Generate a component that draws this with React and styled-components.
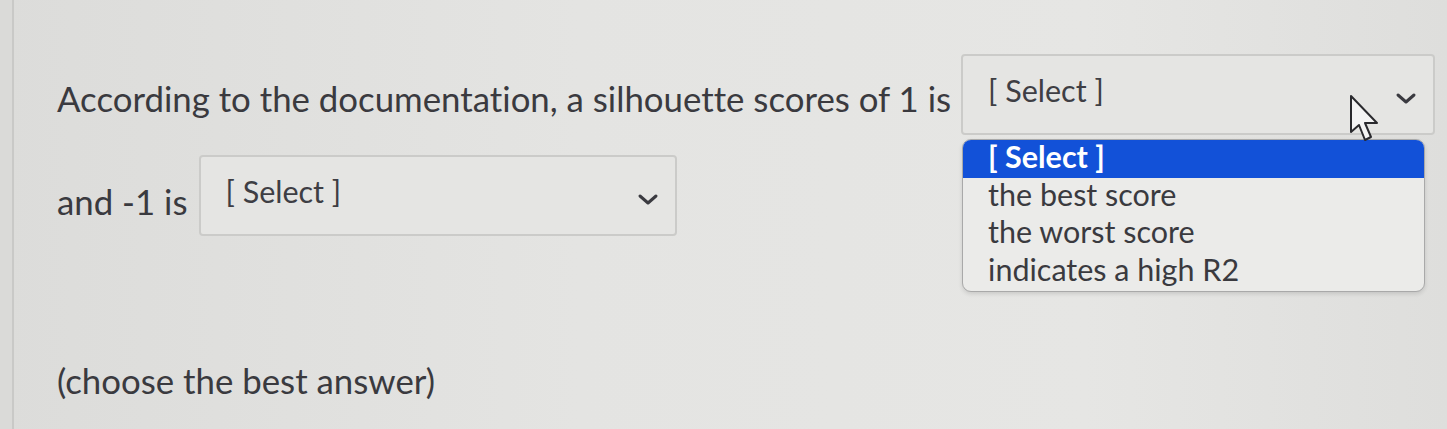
import React from 'react';
import styled, { createGlobalStyle } from 'styled-components';

const GlobalStyle = createGlobalStyle`
  html, body {
    margin: 0;
    padding: 0;
    background: #e2e2e0;
  }
  body {
    font-family: Lato, "Open Sans", sans-serif;
    font-variant-ligatures: none;
    color: #3a3a3f;
  }
`;

const Page = styled.div`
  width: 1447px;
  height: 429px;
  overflow: hidden;
  display: flex;
  background: linear-gradient(90deg, #dcdcda 0%, #e4e4e2 40%, #e6e6e4 75%, #dededc 100%);
`;

const Gutter = styled.div`
  width: 12px;
  flex-shrink: 0;
  border-right: 2px solid #c9c9c7;
  background: #dadad8;
`;

const Question = styled.div`
  flex: 1;
  padding: 54px 0 0 43px;
  display: flex;
  flex-direction: column;
`;

const Line = styled.div`
  display: flex;
  align-items: center;
  gap: ${(p) => p.gap || 10}px;
  margin-top: ${(p) => p.top || 0}px;
`;

const Words = styled.span`
  font-size: 34.8px;
  line-height: 1.2;
  white-space: nowrap;
  transform: translateY(${(p) => p.shift || 0}px);
`;

const SelectWrap = styled.div`
  position: relative;
  width: ${(p) => p.width}px;
`;

const SelectBox = styled.div`
  box-sizing: border-box;
  height: 81px;
  border: 2px solid #cbcbc9;
  border-radius: 4px;
  background: #e5e5e3;
  display: flex;
  align-items: flex-start;
  justify-content: space-between;
  padding: 16px 16px 0 25px;
`;

const Placeholder = styled.span`
  font-size: 30.5px;
  line-height: 1.2;
  color: #3e3e44;
`;

const Chevron = styled.svg`
  width: 22px;
  height: 14px;
  margin-top: 20px;
`;

const ListBox = styled.ul`
  position: absolute;
  top: 85px;
  left: 1px;
  width: 463px;
  box-sizing: border-box;
  margin: 0;
  padding: 0 0 1px;
  list-style: none;
  background: #ebebe9;
  border: 1px solid #a9a9a9;
  border-radius: 9px;
  overflow: hidden;
  box-shadow: 0 2px 4px rgba(0, 0, 0, 0.12);
`;

const Option = styled.li`
  font-size: 30.5px;
  line-height: 32px;
  padding: 0 0 5.5px 25px;
  white-space: nowrap;
  background: ${(p) => (p.active ? '#1251d8' : 'transparent')};
  color: ${(p) => (p.active ? '#ffffff' : '#3a3a3f')};
  font-weight: ${(p) => (p.active ? 700 : 400)};
`;

const Pointer = styled.svg`
  position: absolute;
  left: 388px;
  top: 40px;
  width: 36px;
  height: 50px;
`;

const ChevronIcon = () => (
  <Chevron viewBox="0 0 22 14">
    <path d="M3 3 L11 10 L19 3" fill="none" stroke="#3a3a40" strokeWidth="3" strokeLinecap="round" strokeLinejoin="round" />
  </Chevron>
);

const options = ['[ Select ]', 'the best score', 'the worst score', 'indicates a high R2'];

export default function App() {
  return (
    <>
      <GlobalStyle />
      <Page>
        <Gutter />
        <Question>
          <Line gap={10}>
            <Words shift={4}>According to the documentation, a silhouette scores of 1 is</Words>
            <SelectWrap width={474}>
              <SelectBox>
                <Placeholder>[ Select ]</Placeholder>
                <ChevronIcon />
              </SelectBox>
              <ListBox>
                {options.map((o, i) => (
                  <Option key={o} active={i === 0}>{o}</Option>
                ))}
              </ListBox>
              <Pointer viewBox="0 0 36 50">
                <path
                  d="M2 2 L2 38 L10 31 L16 46 L22 43 L16 29 L28 29 Z"
                  fill="#f4f4f4"
                  stroke="#2a2a2e"
                  strokeWidth="2"
                  strokeLinejoin="round"
                />
              </Pointer>
            </SelectWrap>
          </Line>
          <Line gap={11} top={20}>
            <Words shift={6}>and -1 is</Words>
            <SelectWrap width={478}>
              <SelectBox>
                <Placeholder>[ Select ]</Placeholder>
                <ChevronIcon />
              </SelectBox>
            </SelectWrap>
          </Line>
          <Line top={124}>
            <Words>(choose the best answer)</Words>
          </Line>
        </Question>
      </Page>
    </>
  );
}
